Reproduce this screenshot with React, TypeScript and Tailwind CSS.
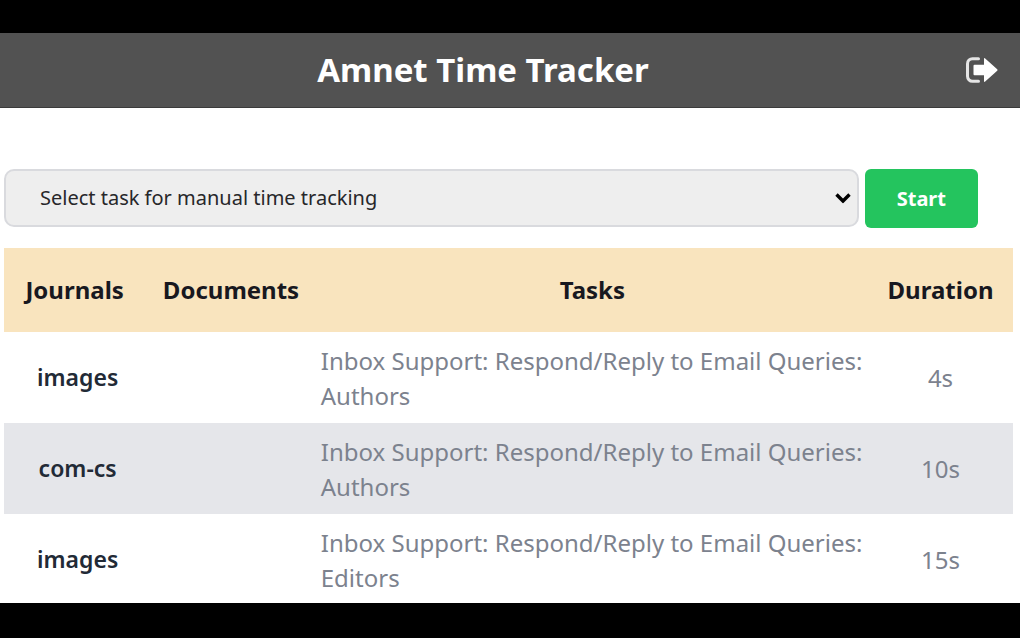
import { useState } from "react";

type Entry = {
  id: number;
  journal: string;
  document: string;
  task: string;
  duration: string;
};

const ENTRIES: Entry[] = [
  { id: 1, journal: "images", document: "", task: "Inbox Support: Respond/Reply to Email Queries: Authors", duration: "4s" },
  { id: 2, journal: "com-cs", document: "", task: "Inbox Support: Respond/Reply to Email Queries: Authors", duration: "10s" },
  { id: 3, journal: "images", document: "", task: "Inbox Support: Respond/Reply to Email Queries: Editors", duration: "15s" },
];

function SignOutIcon() {
  return (
    <svg viewBox="0 0 32 26" className="h-[26px] w-8" aria-hidden="true">
      <path
        d="M12.500 1.700H6.500a5 5 0 0 0-5 5v12.600a5 5 0 0 0 5 5H12.500"
        fill="none"
        stroke="#e5e5e5"
        strokeWidth="3"
        strokeLinecap="round"
      />
      <path
        d="M8.500 7.800H18V2q0-1.600 1.200-.5l12 10.700q.8.800 0 1.600l-12 10.700Q18 25.600 18 24V18.200H8.500q-1 0-1-1V8.800q0-1 1-1z"
        fill="#fff"
      />
    </svg>
  );
}

function Header() {
  return (
    <header className="flex h-[75px] shrink-0 items-center border-b border-[#3a3a3a] bg-[#525252] pr-[22px] text-white">
      <h1 className="flex-1 text-center text-[33px] leading-10 font-bold">Amnet Time Tracker</h1>
      <button type="button" aria-label="Sign out" className="cursor-pointer">
        <SignOutIcon />
      </button>
    </header>
  );
}

function TaskPicker() {
  const [task, setTask] = useState("");
  return (
    <form className="flex items-start gap-1.5 pr-[35px]" onSubmit={(e) => e.preventDefault()}>
      <div className="relative flex-1">
        <select
          aria-label="Task"
          value={task}
          onChange={(e) => setTask(e.target.value)}
          className="h-[58px] w-full appearance-none rounded-[10px] border-2 border-[#d9dade] bg-[#eeeeee] px-[34px] text-xl text-[#27272a]"
        >
          <option value="">Select task for manual time tracking</option>
          <option value="authors">Respond/Reply to Email Queries: Authors</option>
          <option value="editors">Respond/Reply to Email Queries: Editors</option>
        </select>
        <svg
          viewBox="0 0 16 11"
          className="pointer-events-none absolute top-1/2 right-2 h-[11px] w-4 -translate-y-1/2"
          aria-hidden="true"
        >
          <path d="M1.500 2 8 8.500 14.500 2" fill="none" stroke="#000" strokeWidth="3.400" />
        </svg>
      </div>
      <button type="submit" className="h-[59px] rounded-md bg-[#24c45e] px-8 text-xl font-bold text-white">
        Start
      </button>
    </form>
  );
}

function EntriesTable() {
  return (
    <table className="w-full table-fixed text-2xl">
      <colgroup>
        <col className="w-[14%]" />
        <col className="w-[17%]" />
        <col />
        <col className="w-[145px]" />
      </colgroup>
      <thead className="bg-[#f9e4be] text-[#18181f]">
        <tr className="h-[84px]">
          <th scope="col">Journals</th>
          <th scope="col">Documents</th>
          <th scope="col">Tasks</th>
          <th scope="col">Duration</th>
        </tr>
      </thead>
      <tbody className="text-[#7c828e]">
        {ENTRIES.map((e) => (
          <tr key={e.id} className="h-[91px] even:bg-[#e5e6ea]">
            <th scope="row" className="pl-1.5 text-[23px] font-semibold text-[#222a36]">{e.journal}</th>
            <td>{e.document}</td>
            <td className="pl-1 leading-[35px]">{e.task}</td>
            <td className="text-center">{e.duration}</td>
          </tr>
        ))}
      </tbody>
    </table>
  );
}

export default function App() {
  return (
    <div className="flex h-screen flex-col bg-black pt-[33px] pb-[35px] font-['Noto_Sans','Open_Sans',sans-serif]">
      <Header />
      <main className="flex min-h-0 flex-1 flex-col gap-5 overflow-hidden bg-white pt-[61px] pr-[7px] pl-1">
        <TaskPicker />
        <EntriesTable />
      </main>
    </div>
  );
}
